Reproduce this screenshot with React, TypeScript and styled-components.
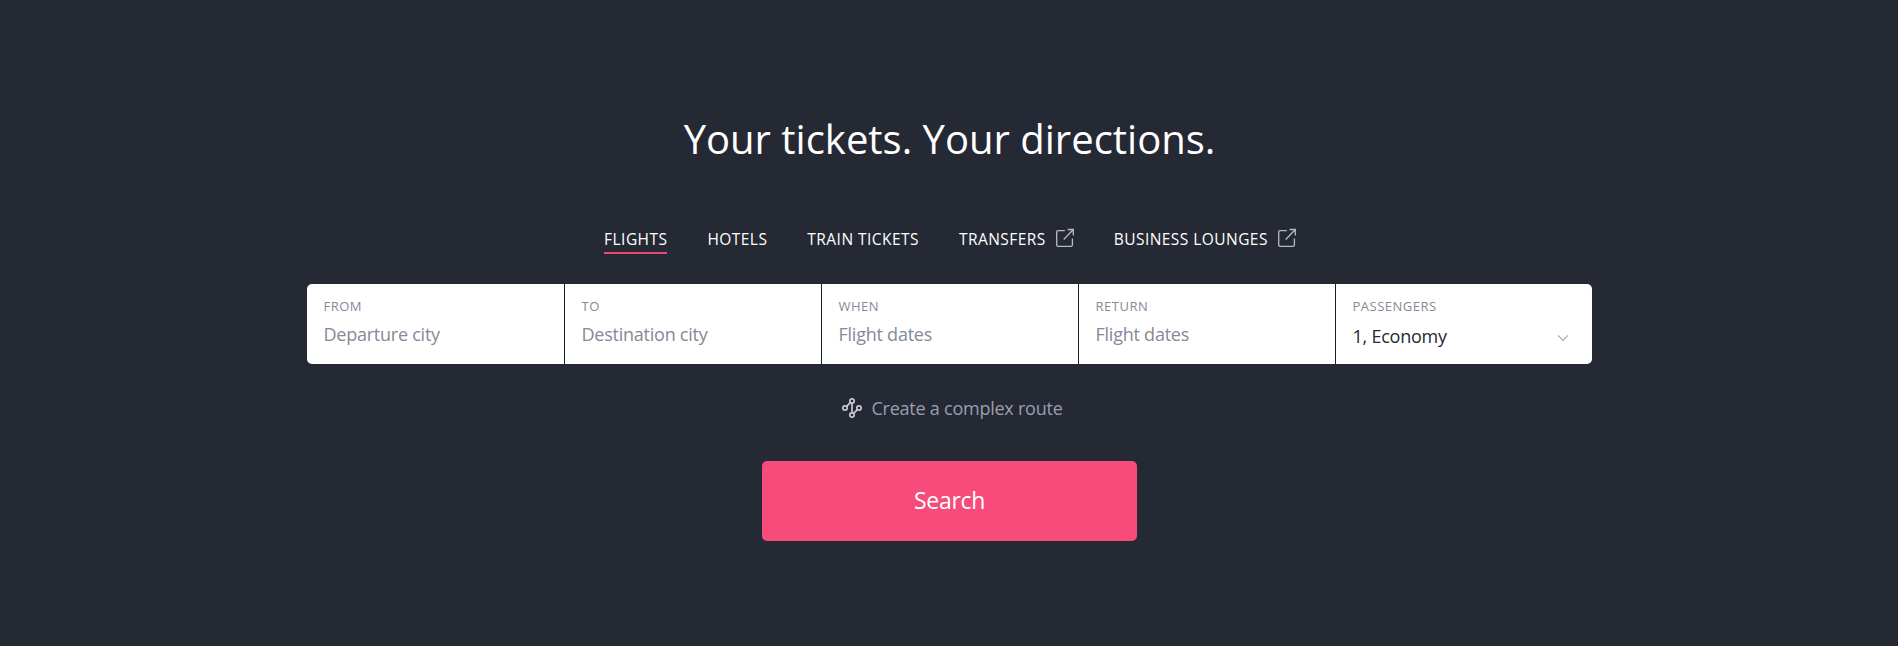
import React from "react";
import styled, { createGlobalStyle } from "styled-components";

const GlobalStyle = createGlobalStyle`
  * { box-sizing: border-box; }
  body {
    margin: 0;
    background: #252933;
    font-family: "Open Sans", "Noto Sans", sans-serif;
  }
`;

const Page = styled.main`
  height: 646px;
  background: #252933;
  display: flex;
  flex-direction: column;
  align-items: center;
  overflow: hidden;
`;

const Title = styled.h1`
  margin: 111px 0 0 1px;
  font-size: 40px;
  line-height: 56px;
  font-weight: 400;
  color: #fff;
  white-space: nowrap;
`;

const Tabs = styled.nav`
  display: flex;
  gap: 40px;
  margin: 59px 0 0 2px;
  height: 28px;
`;

const Tab = styled.a<{ $active?: boolean }>`
  display: flex;
  height: 28px;
  font-size: 15.5px;
  line-height: 27px;
  letter-spacing: 0.45px;
  color: #fff;
  text-transform: uppercase;
  white-space: nowrap;
  border-bottom: 2px solid ${(p) => (p.$active ? "#e84a78" : "transparent")};
`;

const ExternalSvg = styled.svg`
  margin: 2px 0 0 10px;
`;

const Fields = styled.div`
  display: flex;
  width: 1285px;
  height: 80px;
  margin-top: 30px;
  border-radius: 5px;
  overflow: hidden;
  background: #fff;
`;

const Field = styled.div`
  width: 257px;
  padding: 13px 16px 0 17px;
  & + & {
    border-left: 1px solid #1b1f28;
  }
`;

const Label = styled.div`
  font-size: 13px;
  line-height: 18px;
  letter-spacing: 0.5px;
  color: #848a97;
  text-transform: uppercase;
`;

const Value = styled.div<{ $filled?: boolean }>`
  display: flex;
  justify-content: space-between;
  align-items: center;
  margin-top: ${(p) => (p.$filled ? 9 : 7)}px;
  padding-right: 6px;
  font-size: 18px;
  letter-spacing: -0.24px;
  line-height: 24px;
  color: ${(p) => (p.$filled ? "#252933" : "#848a97")};
`;

const RouteLink = styled.a`
  display: flex;
  align-items: center;
  gap: 9px;
  margin: 31px 0 0 7px;
  height: 26px;
  font-size: 18px;
  letter-spacing: -0.24px;
  line-height: 26px;
  color: #9a9eb1;
`;

const SearchButton = styled.button`
  width: 375px;
  height: 80px;
  margin-top: 40px;
  padding: 0 0 2px 1px;
  border: 0;
  border-radius: 5px;
  background: #f74c7b;
  color: #fff;
  font: 400 23px/78px "Open Sans", "Noto Sans", sans-serif;
  letter-spacing: -0.3px;
`;

const ExternalIcon = () => (
  <ExternalSvg width="18" height="20" viewBox="0.6 0 18 20" fill="none" stroke="#b9bbc2" strokeWidth="1.3">
    <path d="M9.5 2.6H2.7a1.4 1.4 0 0 0-1.4 1.4v12.9a1.4 1.4 0 0 0 1.4 1.4h12.9a1.4 1.4 0 0 0 1.4-1.4V10.5" />
    <path d="M8.3 11.5L17.7 1.8M12.2 1.5h5.7v6" />
  </ExternalSvg>
);

const RouteIcon = () => (
  <svg width="20" height="20" viewBox="0 0 20 20" fill="none" stroke="#c6c9d3" strokeWidth="1.7">
    <circle cx="10" cy="3" r="2.2" />
    <circle cx="3" cy="10" r="2.2" />
    <circle cx="17" cy="10" r="2.2" />
    <circle cx="10" cy="17" r="2.2" />
    <path d="M4.6 8.4L8.4 4.6M10 5.2v9.6M11.6 15.4l3.8-3.8" />
  </svg>
);

const ChevronSvg = styled.svg`
  margin: 3px 1px 0 0;
`;

const Chevron = () => (
  <ChevronSvg width="12" height="8" viewBox="0 0 12 8" fill="none" stroke="#a5a8b0" strokeWidth="1.2">
    <path d="M1 1.3l5 5 5-5" />
  </ChevronSvg>
);

const tabs = [
  { name: "Flights", active: true },
  { name: "Hotels" },
  { name: "Train tickets" },
  { name: "Transfers", external: true },
  { name: "Business lounges", external: true },
];

const fields = [
  { label: "From", value: "Departure city" },
  { label: "To", value: "Destination city" },
  { label: "When", value: "Flight dates" },
  { label: "Return", value: "Flight dates" },
  { label: "Passengers", value: "1, Economy", filled: true },
];

export default function App() {
  return (
    <Page>
      <GlobalStyle />
      <Title>Your tickets. Your directions.</Title>
      <Tabs>
        {tabs.map((t) => (
          <Tab key={t.name} $active={t.active}>
            {t.name}
            {t.external && <ExternalIcon />}
          </Tab>
        ))}
      </Tabs>
      <Fields>
        {fields.map((f) => (
          <Field key={f.label}>
            <Label>{f.label}</Label>
            <Value $filled={f.filled}>
              {f.value}
              {f.filled && <Chevron />}
            </Value>
          </Field>
        ))}
      </Fields>
      <RouteLink>
        <RouteIcon />
        Create a complex route
      </RouteLink>
      <SearchButton>Search</SearchButton>
    </Page>
  );
}
